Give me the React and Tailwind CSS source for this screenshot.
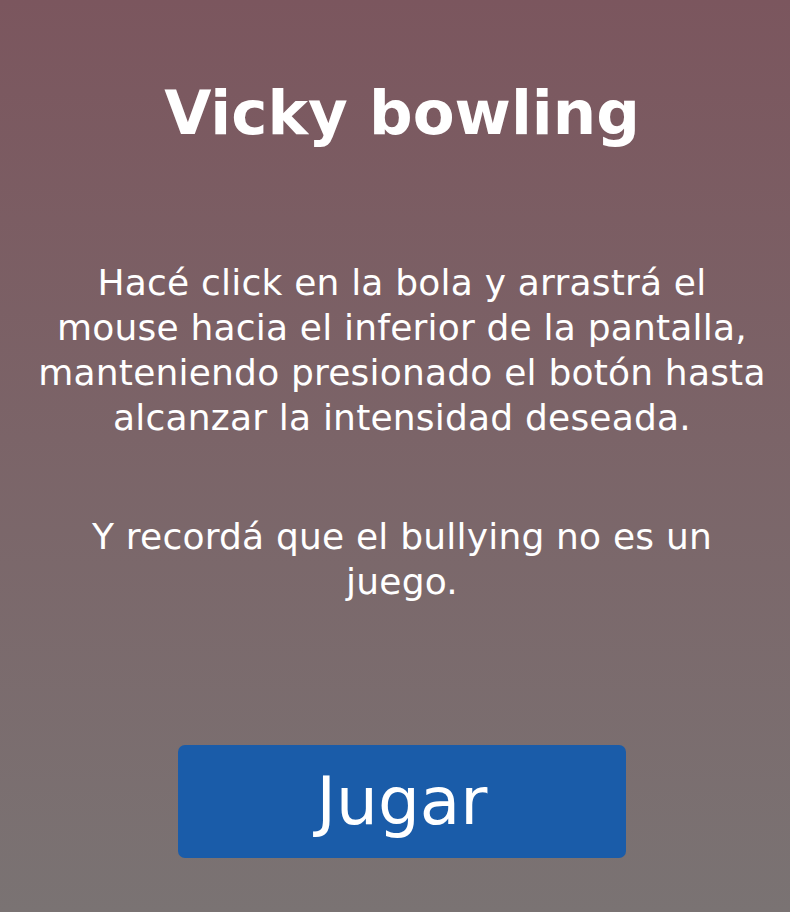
export default function App() {
  return (
    <div
      className="flex min-h-[912px] w-full flex-col items-center bg-gradient-to-b from-[#7b565e] to-[#7a7373] pl-[14px] text-center text-white"
      style={{ fontFamily: '"DejaVu Sans", Verdana, sans-serif' }}
    >
      <h1 className="mt-[77px] text-[61px] font-bold leading-[72px]">Vicky bowling</h1>
      <p className="mt-[111px] text-[36px] leading-[45px] tracking-[0.2px]">
        Hacé click en la bola y arrastrá el
        <br />
        mouse hacia el inferior de la pantalla,
        <br />
        manteniendo presionado el botón hasta
        <br />
        alcanzar la intensidad deseada.
      </p>
      <p className="mt-[74px] text-[36px] leading-[45px] tracking-[0.2px]">
        Y recordá que el bullying no es un
        <br />
        juego.
      </p>
      <button className="mt-[141px] flex h-[113px] w-[448px] items-center justify-center rounded-[7px] bg-[#1a5ca9] text-[66px] leading-none text-white">
        Jugar
      </button>
    </div>
  );
}
